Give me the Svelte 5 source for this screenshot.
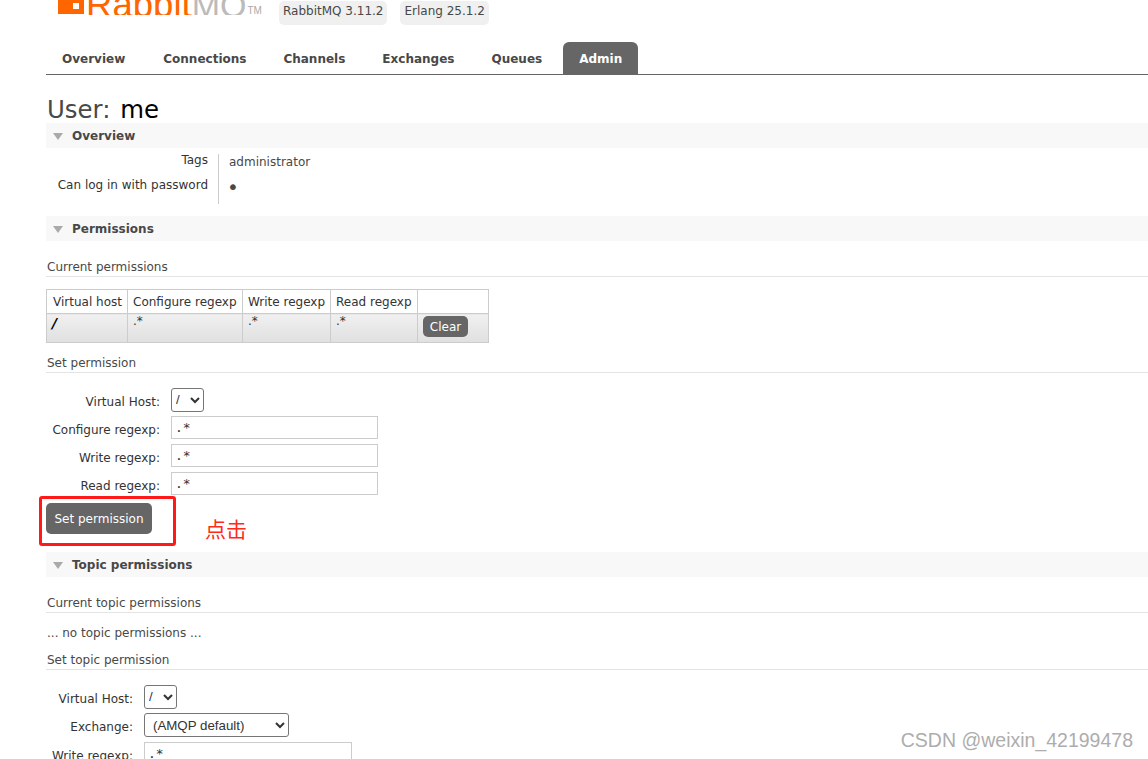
<script>
  const tabs = ['Overview', 'Connections', 'Channels', 'Exchanges', 'Queues', 'Admin']
  const regexps = ['Configure regexp:', 'Write regexp:', 'Read regexp:']
</script>

<div class="page">
  <header>
    <div class="logo">
      <svg class="mark" width="26" height="14" viewBox="0 0 26 14">
        <path fill="#ff6600" d="M0 0H26V14H0Z" />
        <rect x="15" y="3" width="6" height="6" fill="#fff" />
      </svg>
      <span class="rabbit">Rabbit</span><span class="mq">MQ</span><span class="tm">TM</span>
    </div>
    <span class="pill first">RabbitMQ 3.11.2</span>
    <span class="pill">Erlang 25.1.2</span>
  </header>

  <nav>
    {#each tabs as tab}
      <a class:active={tab === 'Admin'}>{tab}</a>
    {/each}
  </nav>

  <h1>User: <b>me</b></h1>

  <div class="section-head"><i></i>Overview</div>
  <div class="facts">
    <div class="keys">
      <div>Tags</div>
      <div>Can log in with password</div>
    </div>
    <div class="vals">
      <div>administrator</div>
      <div class="dot">•</div>
    </div>
  </div>

  <div class="section-head"><i></i>Permissions</div>
  <h3 class="first-sub">Current permissions</h3>
  <table>
    <thead>
      <tr>
        <th class="c1">Virtual host</th>
        <th class="c2">Configure regexp</th>
        <th class="c3">Write regexp</th>
        <th class="c4">Read regexp</th>
        <th class="c5"></th>
      </tr>
    </thead>
    <tbody>
      <tr>
        <td class="vhost">/</td>
        <td>.*</td>
        <td>.*</td>
        <td>.*</td>
        <td><button class="small">Clear</button></td>
      </tr>
    </tbody>
  </table>

  <h3 class="set">Set permission</h3>
  <div class="form">
    <div class="row select-row">
      <label>Virtual Host:</label>
      <select><option>/</option></select>
    </div>
    {#each regexps as label}
      <div class="row">
        <label>{label}</label>
        <input value=".*" />
      </div>
    {/each}
  </div>
  <button class="big">Set permission</button>

  <div class="section-head topic"><i></i>Topic permissions</div>
  <h3 class="first-sub">Current topic permissions</h3>
  <p>... no topic permissions ...</p>
  <h3 class="set-topic">Set topic permission</h3>
  <div class="form topic-form">
    <div class="row select-row">
      <label>Virtual Host:</label>
      <select><option>/</option></select>
    </div>
    <div class="row exchange-row">
      <label>Exchange:</label>
      <select class="exchange"><option>(AMQP default)</option></select>
    </div>
    <div class="row">
      <label>Write regexp:</label>
      <input value=".*" />
    </div>
  </div>

  <div class="callout"></div>
  <div class="callout-text">点击</div>
  <div class="watermark">CSDN @weixin_42199478</div>
</div>

<style>
  :global(body) {
    margin: 0;
    background: #fff;
  }

  .page {
    position: relative;
    height: 759px;
    overflow: hidden;
    padding-left: 46px;
    font-family: "DejaVu Sans", Verdana, sans-serif;
    font-size: 12px;
    color: #484848;
  }

  header {
    height: 42px;
    display: flex;
    align-items: flex-start;
    font-size: 12px;
  }

  .logo {
    width: 233px;
    height: 15px;
    overflow: hidden;
    display: flex;
    align-items: flex-end;
    padding-left: 12px;
    box-sizing: border-box;
    font-family: "Liberation Sans", sans-serif;
    font-size: 36.6px;
    line-height: 20px;
  }

  .mark {
    flex: none;
    margin-right: 2px;
    margin-bottom: 1px;
  }

  .rabbit {
    color: #ff6600;
  }

  .mq {
    color: #bbb;
    font-size: 34px;
  }

  .tm {
    font-size: 10px;
    line-height: 14px;
    color: #aaa;
    margin-left: 1px;
    margin-bottom: -3px;
  }

  .pill {
    background: #f0f0f0;
    border-radius: 5px;
    padding: 0 4px;
    height: 24px;
    line-height: 20px;
    margin-top: 1px;
    margin-right: 13px;
    color: #484848;
  }

  nav {
    display: flex;
    gap: 5px;
    height: 32px;
    border-bottom: 1px solid #666;
  }

  nav a {
    padding: 0 16px;
    line-height: 34px;
    font-weight: bold;
    font-size: 12px;
    color: #484848;
    border-radius: 6px 6px 0 0;
  }

  nav a:first-child {
    margin-right: 1px;
  }

  nav a.active {
    background: #666;
    color: #fff;
  }

  h1 {
    margin: 0;
    height: 48px;
    padding-left: 1px;
    line-height: 69px;
    font-size: 24.4px;
    word-spacing: 2px;
    font-weight: normal;
    color: #484848;
  }

  h1 b {
    font-weight: normal;
    color: #000;
  }

  .section-head {
    display: flex;
    align-items: center;
    height: 25px;
    background: #f8f8f8;
    font-weight: bold;
    font-size: 12px;
    color: #484848;
  }

  .section-head i {
    width: 0;
    height: 0;
    margin: 2px 9px 0 7px;
    border-left: 5.5px solid transparent;
    border-right: 5.5px solid transparent;
    border-top: 7px solid #aaa;
  }

  .facts {
    display: flex;
    height: 68px;
    color: #484848;
  }

  .keys {
    width: 162px;
    padding-right: 10px;
    margin-top: 6px;
    height: 50px;
    text-align: right;
    border-right: 1px solid #ccc;
    line-height: 25px;
    color: #333;
  }

  .keys div:first-child {
    margin-top: -6px;
  }

  .vals {
    padding-left: 10px;
    margin-top: 6px;
    line-height: 25px;
  }

  .vals div:first-child {
    margin-top: -4px;
  }

  .dot {
    font-size: 20px;
    margin: 0 0 0 -2px;
  }

  h3 {
    margin: 0;
    font-size: 12px;
    font-weight: normal;
    line-height: 15px;
    padding: 1px 0 1px 1px;
    border-bottom: 1px solid #e4e4e4;
    color: #484848;
  }

  .first-sub {
    margin-top: 18px;
  }

  table {
    margin-top: 12px;
    border-collapse: collapse;
    font-size: 12px;
    width: 443px;
    table-layout: fixed;
  }

  th,
  td {
    border: 1px solid #ccc;
    padding: 0 5px;
    text-align: left;
    font-weight: normal;
    color: #333;
    white-space: nowrap;
  }

  th {
    height: 23px;
  }

  td {
    height: 28px;
    vertical-align: top;
    background: linear-gradient(#f0f0f0, #e0e0e0);
    line-height: 15px;
  }

  .c1 { width: 81px; box-sizing: border-box; padding-left: 6px; padding-right: 0; }
  .c2 { width: 115px; box-sizing: border-box; }
  .c3 { width: 88px; box-sizing: border-box; }
  .c4 { width: 87px; box-sizing: border-box; }

  .vhost {
    font-weight: bold;
    font-size: 14px;
    font-style: italic;
    color: #000;
    line-height: 18px;
  }

  button {
    border: 0;
    background: #666;
    color: #fff;
    font-family: inherit;
    cursor: pointer;
  }

  .small {
    display: block;
    margin-top: 2px;
    font-size: 12px;
    height: 21px;
    width: 45px;
    padding: 0;
    border-radius: 5px;
  }

  .set {
    margin-top: 12px;
  }

  .form {
    margin-top: 15px;
    display: flex;
    flex-direction: column;
    gap: 5px;
    color: #333;
  }

  .row {
    display: flex;
    align-items: center;
    gap: 11px;
    height: 23px;
  }

  .row label {
    width: 114px;
    padding-top: 4px;
    text-align: right;
    flex: none;
  }

  .row input {
    box-sizing: border-box;
    width: 207px;
    height: 23px;
    border: 1px solid #ccc;
    padding: 0 3px;
    font-family: "DejaVu Sans Mono", monospace;
    font-size: 13px;
    color: #333;
    border-radius: 0;
  }

  select {
    font-family: "Liberation Sans", sans-serif;
    font-size: 13.3px;
    height: 24px;
    border: 1px solid #767676;
    border-radius: 3px;
    background: #fff;
    color: #333;
    width: 33px;
  }

  .big {
    display: block;
    margin-top: 8px;
    width: 106px;
    height: 31px;
    padding: 0;
    font-size: 12px;
    border-radius: 5px;
  }

  .topic {
    margin-top: 18px;
  }

  p {
    margin: 12px 0 0;
    padding-left: 1px;
    line-height: 17px;
    color: #484848;
  }

  .set-topic {
    margin-top: 10px;
  }

  .topic-form .row label {
    width: 87px;
  }

  .topic-form .row input {
    width: 208px;
  }

  .exchange-row {
    height: 24px;
  }

  .exchange {
    width: 145px;
    padding-left: 4px;
  }

  .callout {
    position: absolute;
    left: 39px;
    top: 496px;
    width: 137px;
    height: 50px;
    box-sizing: border-box;
    border: 3px solid #ff1a1a;
    border-radius: 3px;
  }

  .callout-text {
    position: absolute;
    left: 205px;
    top: 515px;
    font-family: "Noto Sans CJK SC", sans-serif;
    font-size: 21px;
    line-height: 26px;
    color: #ff2a1a;
  }

  .watermark {
    position: absolute;
    right: 15px;
    top: 729px;
    font-family: "Liberation Sans", sans-serif;
    font-size: 19.5px;
    line-height: 22px;
    color: #adadad;
  }
</style>
